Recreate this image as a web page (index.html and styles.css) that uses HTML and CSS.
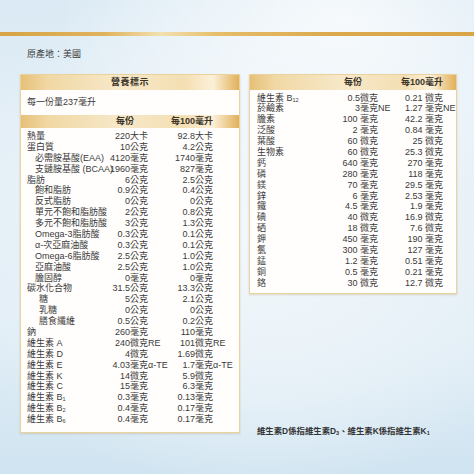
FILE: index.html
```html
<!DOCTYPE html>
<html lang="zh-Hant">
<head>
<meta charset="utf-8">
<title>營養標示</title>
<link rel="stylesheet" href="styles.css">
</head>
<body>
<div class="top"></div>
<div class="stripe"></div>
<p class="origin">原產地：美國</p>
<div class="tables">
  <section class="panel left">
    <div class="band title">營養標示</div>
    <div class="serving">每一份量237毫升</div>
    <div class="band grid colhead"><span></span><span class="h1">每份</span><span class="h2">每100毫升</span></div>
    <div class="grid rows lrows">
      <span>熱量</span><span>220大卡</span><span>92.8大卡</span>
      <span>蛋白質</span><span>10公克</span><span>4.2公克</span>
      <span class="i1">必需胺基酸(EAA)</span><span>4120毫克</span><span>1740毫克</span>
      <span class="i1">支鏈胺基酸 (BCAA)</span><span>1960毫克</span><span>827毫克</span>
      <span>脂肪</span><span>6公克</span><span>2.5公克</span>
      <span class="i1">飽和脂肪</span><span>0.9公克</span><span>0.4公克</span>
      <span class="i1">反式脂肪</span><span>0公克</span><span>0公克</span>
      <span class="i1">單元不飽和脂肪酸</span><span>2公克</span><span>0.8公克</span>
      <span class="i1">多元不飽和脂肪酸</span><span>3公克</span><span>1.3公克</span>
      <span class="i1">Omega-3脂肪酸</span><span>0.3公克</span><span>0.1公克</span>
      <span class="i1">α-次亞麻油酸</span><span>0.3公克</span><span>0.1公克</span>
      <span class="i1">Omega-6脂肪酸</span><span>2.5公克</span><span>1.0公克</span>
      <span class="i1">亞麻油酸</span><span>2.5公克</span><span>1.0公克</span>
      <span class="i1">膽固醇</span><span>0毫克</span><span>0毫克</span>
      <span>碳水化合物</span><span>31.5公克</span><span>13.3公克</span>
      <span class="i2">糖</span><span>5公克</span><span>2.1公克</span>
      <span class="i2">乳糖</span><span>0公克</span><span>0公克</span>
      <span class="i2">膳食纖維</span><span>0.5公克</span><span>0.2公克</span>
      <span>鈉</span><span>260毫克</span><span>110毫克</span>
      <span>維生素 A</span><span>240微克<i class="sx">RE</i></span><span>101微克<i class="sx">RE</i></span>
      <span>維生素 D</span><span>4微克</span><span>1.69微克</span>
      <span>維生素 E</span><span>4.03毫克<i class="sx">α-TE</i></span><span>1.7毫克<i class="sx">α-TE</i></span>
      <span>維生素 K</span><span>14微克</span><span>5.9微克</span>
      <span>維生素 C</span><span>15毫克</span><span>6.3毫克</span>
      <span>維生素 B<small class="sb">1</small></span><span>0.3毫克</span><span>0.13毫克</span>
      <span>維生素 B<small class="sb">2</small></span><span>0.4毫克</span><span>0.17毫克</span>
      <span>維生素 B<small class="sb">6</small></span><span>0.4毫克</span><span>0.17毫克</span>
    </div>
  </section>
  <div class="rightcol">
    <section class="panel right">
      <div class="band grid rhead"><span></span><span class="h1">每份</span><span class="h2">每100毫升</span></div>
      <div class="grid rows rrows">
        <span>維生素 B<small class="sb">12</small></span><span>0.5微克</span><span>0.21 微克</span>
        <span>菸鹼素</span><span>3毫克<i class="sx">NE</i></span><span>1.27 毫克<i class="sx">NE</i></span>
        <span>膽素</span><span>100 毫克</span><span>42.2 毫克</span>
        <span>泛酸</span><span>2 毫克</span><span>0.84 毫克</span>
        <span>葉酸</span><span>60 微克</span><span>25 微克</span>
        <span>生物素</span><span>60 微克</span><span>25.3 微克</span>
        <span>鈣</span><span>640 毫克</span><span>270 毫克</span>
        <span>磷</span><span>280 毫克</span><span>118 毫克</span>
        <span>鎂</span><span>70 毫克</span><span>29.5 毫克</span>
        <span>鋅</span><span>6 毫克</span><span>2.53 毫克</span>
        <span>鐵</span><span>4.5 毫克</span><span>1.9 毫克</span>
        <span>碘</span><span>40 微克</span><span>16.9 微克</span>
        <span>硒</span><span>18 微克</span><span>7.6 微克</span>
        <span>鉀</span><span>450 毫克</span><span>190 毫克</span>
        <span>氯</span><span>300 毫克</span><span>127 毫克</span>
        <span>錳</span><span>1.2 毫克</span><span>0.51 毫克</span>
        <span>銅</span><span>0.5 毫克</span><span>0.21 毫克</span>
        <span>鉻</span><span>30 微克</span><span>12.7 微克</span>
      </div>
    </section>
    <p class="note">維生素D係指維生素D<small class="sb">3</small>、維生素K係指維生素K<small class="sb">1</small></p>
  </div>
</div>
</body>
</html>
```
FILE: styles.css
```css
* { box-sizing: border-box; margin: 0; padding: 0; }
html, body { width: 474px; height: 474px; overflow: hidden; }
body {
  font-family: "Liberation Sans", "Noto Sans CJK TC", sans-serif;
  font-size: 9px;
  color: #3a3a3a;
  background:
    radial-gradient(ellipse 60% 40% at 72% 4%, rgba(255,255,255,0.7), rgba(255,255,255,0) 100%),
    radial-gradient(ellipse 70% 55% at 55% 48%, #f3f8fb 0%, #e9f2f8 55%, rgba(233,242,248,0) 100%),
    linear-gradient(180deg, #dbeaf4 0%, #e5eff7 40%, #e0edf6 70%, #d0e4f1 100%);
}
.top { height: 32px; }
.stripe {
  height: 4px;
  background: linear-gradient(90deg, #d7a446 0%, #dfb35d 22%, #f3e0b0 34%, #e6bd6b 46%, #dcaa4d 70%, #d9a547 100%);
}
.origin { margin: 12px 0 0 27px; height: 12px; line-height: 12px; }
.tables { display: flex; gap: 9px; margin: 14px 0 0 20px; align-items: stretch; }
.panel {
  background: #fffefc;
  border: 1px solid #ead39f;
  box-shadow: 0 1px 2px rgba(170, 140, 80, 0.3);
}
.left { width: 220px; }
.rightcol { width: 208px; display: flex; flex-direction: column; }
.right { width: 208px; }
.band {
  background: linear-gradient(90deg, #e6c077 0%, #f1d8a4 12%, #f7e8c9 45%, #f4dfb3 75%, #fbf0d8 88%, #e2b05b 100%);
  font-weight: 700;
  color: #3a3328;
}
.title { height: 15px; line-height: 15px; text-align: center; letter-spacing: 0.5px; }
.serving { height: 25px; line-height: 25px; padding-left: 6px; }
.grid { display: grid; white-space: nowrap; }
.grid > span { min-width: 0; }
.grid > span:nth-child(3n+2), .grid > span:nth-child(3n) { text-align: right; }
.grid .h1 { text-align: center !important; }
.lrows, .colhead { grid-template-columns: 75px 46px 65px; padding-left: 6px; padding-right: 26px; }
.rrows, .rhead { grid-template-columns: 71px 50px 65px; padding-left: 7px; padding-right: 13px; }
.colhead { height: 13px; line-height: 13px; }
.rhead { height: 15px; line-height: 15px; }
.rows { grid-auto-rows: 10.9px; line-height: 10.9px; }
.lrows { padding-top: 3px; padding-bottom: 7px; }
.rrows { padding-top: 2.5px; padding-bottom: 4px; }
.i1 { padding-left: 8px; }
.i2 { padding-left: 12px; }
.sx { display: inline-block; width: 0; font-style: normal; text-align: left; white-space: nowrap; }
.sb { font-size: 5.5px; vertical-align: -1px; line-height: 0; }
.note { margin-top: auto; margin-bottom: -3px; margin-left: 8px; line-height: 10px; font-weight: 700; font-size: 8.4px; color: #333; }
```
